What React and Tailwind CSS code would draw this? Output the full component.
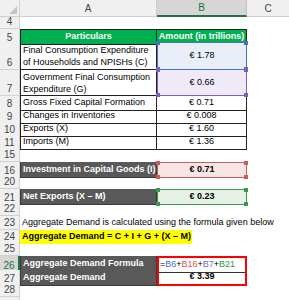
import React from 'react';

const font = { fontFamily: '"Liberation Sans", Arial, sans-serif' };

const Handles = ({ color }) => (
  <>
    <span className={`absolute -left-[2px] -top-[2px] w-[4px] h-[4px] ${color}`} />
    <span className={`absolute -right-[2px] -top-[2px] w-[4px] h-[4px] ${color}`} />
    <span className={`absolute -left-[2px] -bottom-[2px] w-[4px] h-[4px] ${color}`} />
    <span className={`absolute -right-[2px] -bottom-[2px] w-[4px] h-[4px] ${color}`} />
  </>
);

const Row = ({ n, h, sel, children }) => (
  <div className={`grid grid-cols-[20px_137px_90px_1fr] ${h}`}>
    <div
      className={
        sel
          ? 'flex items-end justify-center pb-[1px] bg-[#d6d6d6] border-b border-[#c8c8c8] border-r-2 border-r-[#217346] text-[#217346] text-[10px] leading-none'
          : 'flex items-end justify-center pb-[1px] bg-[#f0f0f0] border-b border-r border-[#d0d0d0] text-[#444] text-[10px] leading-none'
      }
    >
      {n}
    </div>
    {children}
  </div>
);

const Empty = () => <div />;

const GrayA = ({ children }) => (
  <div className="flex items-center px-[2px] bg-[#595959] border-b border-r border-l border-[#3a3a3a] text-white font-bold whitespace-nowrap overflow-hidden">
    {children}
  </div>
);

const PlainA = ({ children }) => (
  <div className="flex items-center px-[2px] border-b border-r border-l border-[#222] whitespace-nowrap overflow-hidden">
    {children}
  </div>
);

const PlainB = ({ children }) => (
  <div className="flex items-center justify-center border-b border-r border-[#222]">{children}</div>
);

export default function App() {
  return (
    <div className="w-[289px] h-[300px] overflow-hidden bg-white text-black text-[9px]" style={font}>
      {/* column header */}
      <div className="grid grid-cols-[20px_137px_90px_1fr] h-[15px] text-[10px] text-[#444]">
        <div className="relative bg-[#f0f0f0] border-b border-r border-[#d0d0d0]">
          <svg className="absolute right-[2px] bottom-[2px]" width="8" height="8" viewBox="0 0 8 8">
            <polygon points="8,0 8,8 0,8" fill="#c4c4c4" />
          </svg>
        </div>
        <div className="flex items-center justify-center bg-[#f0f0f0] border-b border-r border-[#d0d0d0]">A</div>
        <div className="flex items-center justify-center bg-[#d6d6d6] border-r border-[#c0c0c0] border-b-2 border-b-[#217346] text-[#217346]">B</div>
        <div className="flex items-center justify-center bg-[#f0f0f0] border-b border-[#d0d0d0]">C</div>
      </div>

      <Row n="4" h="h-[14px]"><Empty /><Empty /><Empty /></Row>

      <Row n="5" h="h-[13px]">
        <div className="flex items-center justify-center bg-[#00b050] border border-[#222] text-white font-bold">Particulars</div>
        <div className="flex items-center justify-center bg-[#00b050] border-t border-b border-r border-[#222] text-white font-bold whitespace-nowrap">Amount (in trillions)</div>
        <Empty />
      </Row>

      <Row n="6" h="h-[28px]">
        <div className="flex flex-col justify-center px-[2px] border-b border-r border-l border-[#222] leading-[12px] whitespace-nowrap overflow-hidden">
          <span>Final Consumption Expenditure</span>
          <span>of Households and NPISHs (C)</span>
        </div>
        <div className="relative flex items-center justify-center bg-[#e9eef9] border border-[#4472c4]">
          € 1.78
          <Handles color="bg-[#4472c4]" />
        </div>
        <Empty />
      </Row>

      <Row n="7" h="h-[26px]">
        <div className="flex flex-col justify-center px-[2px] border-b border-r border-l border-[#222] leading-[12px] whitespace-nowrap overflow-hidden">
          <span>Government Final Consumption</span>
          <span>Expenditure (G)</span>
        </div>
        <div className="relative flex items-center justify-center bg-[#efeaf7] border border-t-0 border-[#7e5fc0]">
          € 0.66
          <Handles color="bg-[#7e5fc0]" />
        </div>
        <Empty />
      </Row>

      <Row n="8" h="h-[13px]"><PlainA>Gross Fixed Capital Formation</PlainA><PlainB>€ 0.71</PlainB><Empty /></Row>
      <Row n="9" h="h-[13px]"><PlainA>Changes in Inventories</PlainA><PlainB>€ 0.008</PlainB><Empty /></Row>
      <Row n="10" h="h-[13px]"><PlainA>Exports (X)</PlainA><PlainB>€ 1.60</PlainB><Empty /></Row>
      <Row n="11" h="h-[14px]"><PlainA>Imports (M)</PlainA><PlainB>€ 1.36</PlainB><Empty /></Row>

      <Row n="15" h="h-[13px]"><Empty /><Empty /><Empty /></Row>

      <Row n="16" h="h-[14px]">
        <GrayA>Investment in Capital Goods (I)</GrayA>
        <div className="relative flex items-center justify-center bg-[#f7e4e4] border border-[#cf5a5a] font-bold">
          € 0.71
          <Handles color="bg-[#cf5a5a]" />
        </div>
        <Empty />
      </Row>

      <Row n="20" h="h-[13px]"><Empty /><Empty /><Empty /></Row>

      <Row n="21" h="h-[14px]">
        <GrayA>Net Exports (X – M)</GrayA>
        <div className="relative flex items-center justify-center bg-[#e5f1e7] border border-[#3a9a4a] font-bold">
          € 0.23
          <Handles color="bg-[#3a9a4a]" />
        </div>
        <Empty />
      </Row>

      <Row n="22" h="h-[13px]"><Empty /><Empty /><Empty /></Row>

      <Row n="23" h="h-[14px]">
        <div className="flex items-center px-[2px] whitespace-nowrap overflow-visible">
          Aggregate Demand is calculated using the formula given below
        </div>
        <Empty /><Empty />
      </Row>

      <Row n="24" h="h-[13px]">
        <div className="overflow-visible">
          <div className="flex items-center h-full w-[172px] px-[2px] bg-[#ffff00] font-bold whitespace-nowrap">
            Aggregate Demand = C + I + G + (X – M)
          </div>
        </div>
        <Empty /><Empty />
      </Row>

      <Row n="25" h="h-[13px]"><Empty /><Empty /><Empty /></Row>

      <Row n="26" h="h-[14px]" sel>
        <GrayA>Aggregate Demand Formula</GrayA>
        <div className="flex items-center px-[1px] border-2 border-b border-[#ff0000] border-b-[#333] whitespace-nowrap">
          <span>=</span>
          <span className="text-[#4472c4]">B6</span>
          <span>+</span>
          <span className="text-[#d9534f]">B16</span>
          <span>+</span>
          <span className="text-[#8064c4]">B7</span>
          <span>+</span>
          <span className="text-[#2e9a42]">B21</span>
        </div>
        <Empty />
      </Row>

      <Row n="27" h="h-[13px]">
        <GrayA>Aggregate Demand</GrayA>
        <div className="flex items-center justify-center border-2 border-t-0 border-[#ff0000] font-bold">€ 3.39</div>
        <Empty />
      </Row>

      <Row n="28" h="h-[14px]"><Empty /><Empty /><Empty /></Row>
      <Row n="" h="h-[14px]"><Empty /><Empty /><Empty /></Row>
    </div>
  );
}
